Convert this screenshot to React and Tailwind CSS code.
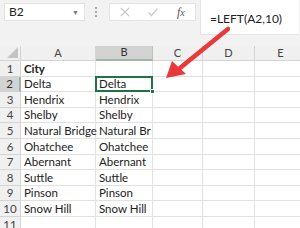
import React from "react";

const cols = ["A", "B", "C", "D", "E"];
const data = [
  ["City", ""],
  ["Delta", "Delta"],
  ["Hendrix", "Hendrix"],
  ["Shelby", "Shelby"],
  ["Natural Bridge", "Natural Br"],
  ["Ohatchee", "Ohatchee"],
  ["Abernant", "Abernant"],
  ["Suttle", "Suttle"],
  ["Pinson", "Pinson"],
  ["Snow Hill", "Snow Hill"],
  ["", ""],
];

export default function App() {
  return (
    <div
      className="relative w-[300px] h-[228px] overflow-hidden bg-white text-[#222]"
      style={{ fontFamily: "Lato, 'Liberation Sans', sans-serif" }}
    >
      {/* formula bar area */}
      <div className="flex items-start h-[46px] bg-[#f2f2f2]">
        <div className="ml-[4px] mt-[3px] w-[81px] h-[18px] bg-white border border-[#e3e3e3] flex items-center justify-between pl-[4px] pr-[5px]">
          <span className="text-[12px] leading-none">B2</span>
          <span className="text-[7px] text-[#777] leading-none">▼</span>
        </div>
        <div className="ml-[10px] mt-[7px] flex flex-col gap-[2px]">
          <span className="w-[2px] h-[2px] bg-[#aaa]" />
          <span className="w-[2px] h-[2px] bg-[#aaa]" />
          <span className="w-[2px] h-[2px] bg-[#aaa]" />
        </div>
        <div className="ml-[12px] mt-[3px] w-[87px] h-[18px] bg-white border border-[#e3e3e3] flex items-center">
          <svg width="12" height="12" viewBox="0 0 12 12" className="ml-[9px]">
            <path d="M2 2 L10 10 M10 2 L2 10" stroke="#c8c8c8" strokeWidth="1.2" fill="none" />
          </svg>
          <svg width="12" height="12" viewBox="0 0 12 12" className="ml-[16px]">
            <path d="M1.5 6.5 L4.5 9.5 L10.5 2.5" stroke="#c8c8c8" strokeWidth="1.2" fill="none" />
          </svg>
          <span
            className="ml-[18px] text-[12px] italic text-[#555] leading-none"
            style={{ fontFamily: "'Liberation Serif', serif" }}
          >
            f<span className="text-[10px]">x</span>
          </span>
        </div>
        <div className="ml-[4px] w-[99px] h-[35px] bg-white border-l border-b border-[#e3e3e3] pl-[9px] pt-[5px]">
          <span className="text-[12px]">=LEFT(A2,10)</span>
        </div>
      </div>

      {/* grid */}
      <div className="grid grid-cols-[21px_75px_57px_50px_52px_52px] grid-rows-[15px_repeat(11,15.6px)]">
        {/* corner */}
        <div className="relative bg-[#f0f0f0] border-r border-b border-[#d4d4d4]">
          <div className="absolute right-[2px] bottom-[2px] w-0 h-0 border-l-[11px] border-l-transparent border-b-[11px] border-b-[#c4c4c4]" />
        </div>
        {cols.map((c) => (
          <div
            key={c}
            className={
              c === "B"
                ? "flex items-center justify-center text-[11px] text-[#333] bg-[#d3d3d3] border-r border-[#c0c0c0] border-b-2 border-b-[#9cb8a4]"
                : "flex items-center justify-center text-[11px] text-[#444] bg-[#f0f0f0] border-r border-b border-[#d4d4d4]"
            }
          >
            {c}
          </div>
        ))}
        {data.map((row, i) => (
          <React.Fragment key={i}>
            <div
              className={
                i === 1
                  ? "flex items-center justify-center text-[11.5px] text-[#333] bg-[#d3d3d3] border-r-2 border-r-[#9cb8a4] border-b border-b-[#d4d4d4]"
                  : "flex items-center justify-center text-[11.5px] text-[#444] bg-[#f0f0f0] border-r border-b border-[#d4d4d4]"
              }
            >
              {i + 1}
            </div>
            <div
              className={
                "flex items-center pl-[3px] whitespace-nowrap text-[11.5px] border-r border-b border-[#e1e1e1] " +
                (i === 0 ? "font-bold" : "")
              }
            >
              {row[0]}
            </div>
            <div
              className={
                i === 1
                  ? "relative flex items-center pl-[2px] whitespace-nowrap text-[11.5px] border-2 border-[#217346] -mt-[1px] -ml-[1px]"
                  : "flex items-center pl-[3px] whitespace-nowrap overflow-hidden text-[11.5px] border-r border-b border-[#e1e1e1]"
              }
            >
              {row[1]}
              {i === 1 && (
                <span className="absolute -right-[4px] -bottom-[4px] w-[5px] h-[5px] bg-[#217346] border border-white" />
              )}
            </div>
            <div className="border-r border-b border-[#e1e1e1]" />
            <div className="border-r border-b border-[#e1e1e1]" />
            <div className="border-r border-b border-[#e1e1e1]" />
          </React.Fragment>
        ))}
      </div>

      {/* red arrow */}
      <svg
        className="absolute left-0 top-0 pointer-events-none"
        width="300"
        height="228"
        viewBox="0 0 300 228"
      >
        <line x1="228" y1="29" x2="180" y2="68" stroke="#e8393b" strokeWidth="4.5" strokeLinecap="round" />
        <polygon points="166,78 172,61 186,74" fill="#e8393b" />
      </svg>
    </div>
  );
}
